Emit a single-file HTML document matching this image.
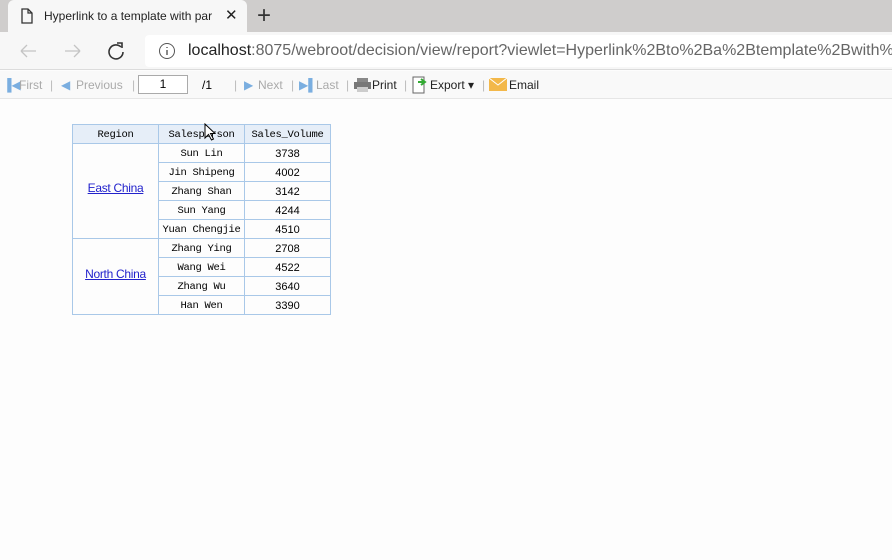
<!DOCTYPE html>
<html><head><style>
*{margin:0;padding:0;box-sizing:border-box}
body{width:892px;height:560px;overflow:hidden;background:#fdfdfd;font-family:"Liberation Sans",sans-serif;position:relative}
.abs{position:absolute}
.tabbar{left:0;top:0;width:892px;height:32px;background:#cfcdcc}
.tab{left:8px;top:0;width:239px;height:33px;background:#f7f7f7;border-radius:6px 6px 0 0}
.addr{left:0;top:32px;width:892px;height:38px;background:#f7f7f7;border-bottom:1px solid #dcdcdc}
.field{left:145px;top:35px;width:747px;height:32px;background:#fff;border-radius:4px 0 0 4px}
.tool{left:0;top:71px;width:892px;height:28px;background:#f9f9f9;border-bottom:1px solid #e6e6e6;font-size:12px;color:#aaa}
.tool span{position:absolute;top:7px}
.sep{color:#bbb}
table{position:absolute;left:72px;top:124px;border-collapse:collapse;font-family:"Liberation Mono",monospace;font-size:10.5px}
td{border:1px solid #a9c8e8;height:19px;width:86px;text-align:center;color:#000;padding:2px 0 0 0;white-space:nowrap;letter-spacing:-0.3px}
th{border:1px solid #a9c8e8;height:19px;width:86px;background:#e6eef8;font-weight:normal;font-size:10.5px;letter-spacing:-0.3px;padding-top:2px}
td.n{font-family:"Liberation Sans",sans-serif;font-size:11px;letter-spacing:0}
td.r{padding:0 0 5px 0}
a{color:#2222cc;font-family:"Liberation Sans",sans-serif;font-size:12px;text-decoration:underline}
</style></head><body>
<div class="abs tabbar"></div>
<div class="abs tab"></div>
<svg class="abs" style="left:20px;top:8px" width="14" height="16"><path d="M2 1h6l4 4v10H2z" fill="none" stroke="#333" stroke-width="1.3"/><path d="M8 1v4h4" fill="none" stroke="#333" stroke-width="1.2"/></svg>
<div class="abs" style="left:44px;top:9px;font-size:12px;color:#222">Hyperlink to a template with par</div>
<div class="abs" style="left:225px;top:6px;font-size:15px;color:#222">✕</div>
<div class="abs" style="left:257px;top:2px;font-size:24px;color:#333;font-weight:300">+</div>
<div class="abs addr"></div>
<div class="abs field"></div>
<svg class="abs" style="left:18px;top:41px" width="70" height="20"><path d="M3 10h15M3 10l6-6M3 10l6 6" stroke="#c4c4c4" fill="none" stroke-width="1.3"/><path d="M47 10h15M62 10l-6-6M62 10l-6 6" stroke="#c4c4c4" fill="none" stroke-width="1.3"/></svg>
<svg class="abs" style="left:106px;top:41px" width="20" height="20"><path d="M15 6A7 7 0 1 0 17 11" stroke="#333" fill="none" stroke-width="1.6"/><path d="M11 2h5v5" stroke="#333" fill="none" stroke-width="1.6"/></svg>
<svg class="abs" style="left:158px;top:42px" width="18" height="18"><circle cx="9" cy="9" r="7.5" stroke="#555" fill="none"/><path d="M9 8v5M9 5v1" stroke="#555" stroke-width="1.4"/></svg>
<div class="abs" style="left:188px;top:42px;font-size:16px;color:#222;white-space:nowrap">localhost<span style="color:#666">:8075/webroot/decision/view/report?viewlet=Hyperlink%2Bto%2Ba%2Btemplate%2Bwith%</span></div>
<div class="abs tool">
<span style="left:3px;color:#7aaee0">▐◀</span><span style="left:19px">First</span><span class="sep" style="left:50px">|</span>
<span style="left:61px;color:#7aaee0">◀</span><span style="left:76px">Previous</span><span class="sep" style="left:132px">|</span>
<div style="position:absolute;left:138px;top:4px;width:50px;height:19px;border:1px solid #aaa;background:#fff;color:#000;text-align:center;line-height:17px">1</div>
<span style="left:202px;color:#000">/1</span>
<span class="sep" style="left:234px">|</span><span style="left:244px;color:#7aaee0">▶</span><span style="left:258px">Next</span>
<span class="sep" style="left:291px">|</span><span style="left:299px;color:#7aaee0">▶▌</span><span style="left:316px">Last</span>
<span class="sep" style="left:346px">|</span>
<svg style="position:absolute;left:354px;top:6px" width="17" height="15"><rect x="3" y="1" width="11" height="4" fill="#888"/><rect x="0" y="5" width="17" height="7" fill="#777"/><rect x="3" y="10" width="11" height="5" fill="#ccc"/></svg>
<span style="left:372px;color:#222">Print</span><span class="sep" style="left:404px">|</span>
<svg style="position:absolute;left:412px;top:5px" width="16" height="18"><path d="M1 1h11v16H1z" fill="#fff" stroke="#666"/><path d="M6 6h6M9 3l4 3-4 3" stroke="#3a3" stroke-width="2" fill="none"/></svg>
<span style="left:430px;color:#222">Export ▾</span><span class="sep" style="left:482px">|</span>
<svg style="position:absolute;left:489px;top:7px" width="18" height="13"><rect width="18" height="13" fill="#f3b84a"/><path d="M0 0l9 7 9-7" stroke="#fff" fill="none"/></svg>
<span style="left:509px;color:#222">Email</span>
</div>
<table>
<tr><th>Region</th><th>Salesperson</th><th>Sales_Volume</th></tr>
<tr><td rowspan="5" class="r"><a>East China</a></td><td>Sun Lin</td><td class="n">3738</td></tr>
<tr><td>Jin Shipeng</td><td class="n">4002</td></tr>
<tr><td>Zhang Shan</td><td class="n">3142</td></tr>
<tr><td>Sun Yang</td><td class="n">4244</td></tr>
<tr><td>Yuan Chengjie</td><td class="n">4510</td></tr>
<tr><td rowspan="4" class="r"><a>North China</a></td><td>Zhang Ying</td><td class="n">2708</td></tr>
<tr><td>Wang Wei</td><td class="n">4522</td></tr>
<tr><td>Zhang Wu</td><td class="n">3640</td></tr>
<tr><td>Han Wen</td><td class="n">3390</td></tr>
</table>
<svg class="abs" style="left:204px;top:123px" width="12" height="18"><path d="M1 1v14l3.5-3.5 3 5.5 2-1-3-5.5H11z" fill="#fff" stroke="#000"/></svg>
</body></html>
